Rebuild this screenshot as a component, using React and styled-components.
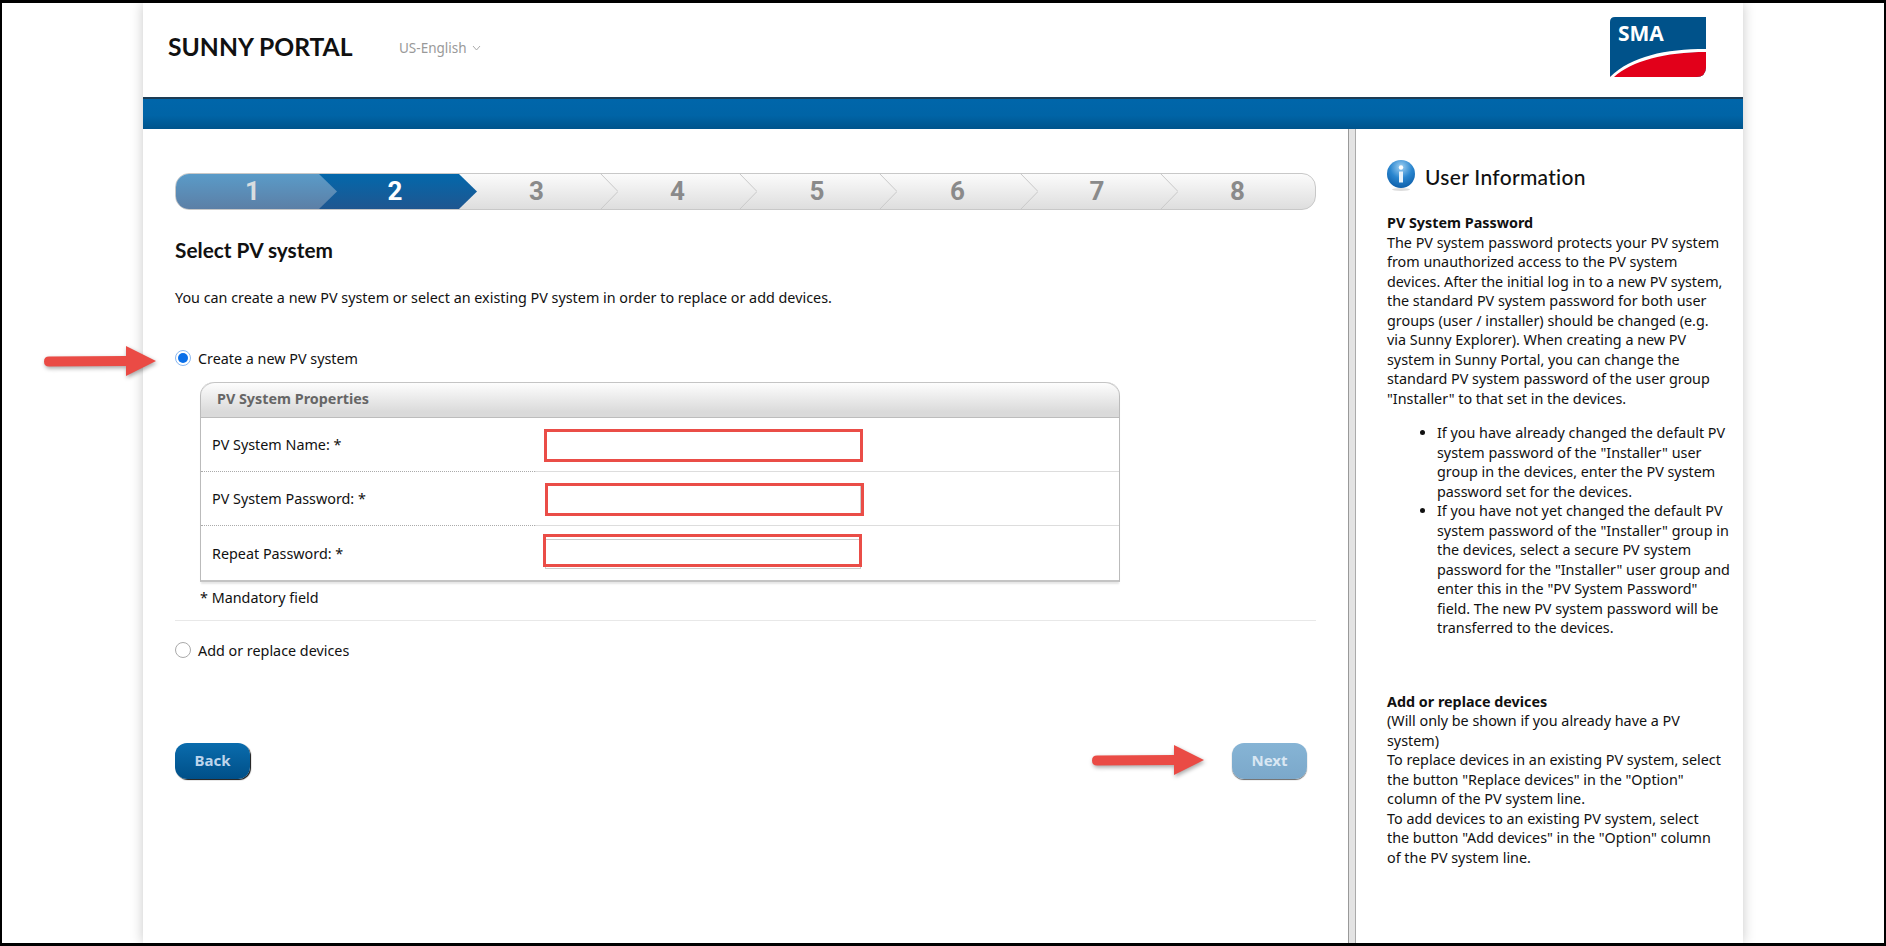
import React from "react";
import styled, { createGlobalStyle } from "styled-components";

const Global = createGlobalStyle`
  html, body { margin: 0; padding: 0; background: #fff; }
  body { font-family: "Noto Sans", "Open Sans", sans-serif; font-size: 14.35px; color: #111; }
`;

const Frame = styled.div`
  box-sizing: border-box; width: 1886px; height: 946px; overflow: hidden;
  border: solid #000; border-width: 3px 2px;
  background: #fff;
`;
const Page = styled.div`
  width: 1600px; height: 940px; margin-left: 141px; background: #fff;
  display: flex; flex-direction: column;
  box-shadow: 0 0 12px rgba(0,0,0,.22);
`;
const Header = styled.header`
  height: 94px; flex: none; display: flex; align-items: center; padding: 0 37px 0 25px; box-sizing: border-box;
`;
const Brand = styled.div`
  font-family: "Lato", sans-serif; font-weight: 700; font-size: 24.7px; color: #111; width: 231px; white-space: nowrap;
  margin-top: -8px;
`;
const Lang = styled.div`
  display: flex; align-items: center; gap: 5px; font-size: 13.5px; color: #999; flex: 1; margin-top: -5px;
`;
const LogoSlot = styled.div`display: flex; margin-top: -7px;`;
const BlueBar = styled.div`
  height: 32px; flex: none; box-sizing: border-box; border-top: 2px solid #1c3c55;
  background: linear-gradient(#0066aa 0%, #0064a6 55%, #00548c 100%);
`;
const Main = styled.main`flex: 1; display: flex; min-height: 0;`;
const Content = styled.section`
  width: 1205px; flex: none; box-sizing: border-box; padding: 44px 32px 0 32px;
`;
const Divider = styled.div`
  width: 8px; flex: none; box-sizing: border-box; background: #e3e3e3;
  border-left: 1px solid #999; border-right: 1px solid #aaa;
`;
const Aside = styled.aside`
  flex: 1; box-sizing: border-box; padding: 32px 0 0 31px; line-height: 19.5px; white-space: nowrap;
`;

const Stepper = styled.div`
  display: flex; height: 37px; box-sizing: border-box; border: 1px solid #c8c8c8; border-radius: 14px; overflow: hidden;
  background: linear-gradient(#fbfbfb, #dedede);
`;
const Step = styled.div`
  position: relative; flex: none; width: ${p => p.$w}px; z-index: ${p => p.$z};
  display: flex; align-items: center; justify-content: center; padding-left: ${p => p.$pad}px; box-sizing: border-box;
`;
const StepFill = styled.div`
  position: absolute; top: 0; bottom: 0; left: 0; right: -18px;
  background: ${p => p.$kind === "done" ? "linear-gradient(#5a9bc8, #5c7fa6)" : "linear-gradient(#0368ab, #1f5690)"};
  clip-path: polygon(0 0, calc(100% - 18px) 0, 100% 50%, calc(100% - 18px) 100%, 0 100%);
`;
const StepNum = styled.span`
  position: relative; font-family: "Roboto", sans-serif; font-weight: 700; font-size: 26px; line-height: 1; margin-top: -1px;
  color: ${p => p.$kind === "done" ? "#d8dde0" : p.$kind === "active" ? "#fff" : "#8a8a8a"};
`;
const Chevron = styled.svg`position: absolute; top: -1px; right: -18px; width: 18px; height: 37px;`;

const Title = styled.h1`
  margin: 26px 0 0; font-family: "Lato", sans-serif; font-weight: 700; font-size: 20.8px; line-height: 27px; color: #111;
`;
const Intro = styled.p`margin: 25px 0 0; line-height: 20px;`;
const RadioRow = styled.label`
  position: relative; display: flex; align-items: center; gap: 7px; height: 20px; margin-top: ${p => p.$top}px;
`;
const Radio = styled.span`
  width: 16px; height: 16px; box-sizing: border-box; border-radius: 50%; background: #fff; flex: none;
  border: 1px solid ${p => p.$on ? "#8ab8f0" : "#aaa"};
  display: flex; align-items: center; justify-content: center;
  &::after { content: ""; display: ${p => p.$on ? "block" : "none"}; width: 10px; height: 10px; border-radius: 50%; background: #0a6fe8; }
`;
const Card = styled.div`
  width: 920px; margin: 14px 0 0 25px; box-sizing: border-box;
  border: 1px solid #bbb; border-top: 0; border-bottom: 2px solid #c4c4c4;
  box-shadow: 0 3px 2px -1px #e6e6e6;
  border-radius: 14px 14px 0 0;
`;
const CardHead = styled.div`
  height: 36px; box-sizing: border-box; display: flex; align-items: center; padding: 0 0 3px 16px;
  font-weight: 700; font-size: 14.35px; color: #666;
  border-radius: 14px 14px 0 0; border-top: 1px solid #c4c4c4; border-bottom: 1px solid #bcbcbc;
  background: linear-gradient(#fdfdfd 0%, #dadada 85%);
`;
const Row = styled.div`display: flex; height: 54px;`;
const LabelCell = styled.div`
  width: 323px; padding-left: 11px; flex: none; display: flex; align-items: center;
  ${p => p.$last ? "" : "border-bottom: 1px dotted #aaa;"}
`;
const FieldCell = styled.div`
  flex: 1; padding: 13px 0 0 10px;
  ${p => p.$last ? "" : "border-bottom: 1px solid #ddd;"}
`;
const Field = styled.div`position: relative; width: 316px; height: 30px; box-sizing: border-box; border: 1px solid #ccc; background: #fff;`;
const RedBox = styled.div`
  position: absolute; left: ${p => p.$x}px; top: ${p => p.$y}px; width: 319px; height: 33px; box-sizing: border-box;
  border: 3px solid #ea4d47;
`;
const Note = styled.div`margin: 6px 0 0 25px; line-height: 20px;`;
const Rule = styled.hr`border: 0; height: 1px; background: #e8e8e8; margin: 12px 0 0;`;
const Buttons = styled.div`display: flex; justify-content: space-between; margin-top: 83px; padding-right: 9px;`;
const Button = styled.button`
  position: relative; width: 75px; height: 36px; border: 0; border-radius: 12px; padding: 0 0 3px; font: 700 15px "Noto Sans", sans-serif;
  ${p => p.$primary
    ? "color: #bdd5ec; background: linear-gradient(#0a6cad, #004f88); box-shadow: 1px 1px 1px #111;"
    : "color: #d9e7f3; background: linear-gradient(#86b4d5, #7ba8ca); box-shadow: 0 1px 1px #666;"}
`;
const ArrowMark = styled.svg`
  position: absolute; left: ${p => p.$x}px; top: ${p => p.$y}px; width: 112px; height: 30px; overflow: visible;
  filter: drop-shadow(1px 2px 2px rgba(0,0,0,.35));
`;

const InfoHead = styled.div`display: flex; align-items: center; gap: 10px; height: 30px;`;
const InfoTitle = styled.h2`margin: 2px 0 0; font-family: "Lato", sans-serif; font-weight: 500; font-size: 21px; line-height: 30px; color: #111; letter-spacing: .3px;`;
const Sub = styled.div`font-weight: 700; margin-top: ${p => p.$top}px;`;
const Bullets = styled.ul`margin: 15px 0 0; padding: 0 0 0 50px;`;

const Arrow = ({ x, y }) => (
  <ArrowMark $x={x} $y={y} viewBox="0 0 112 30">
    <path d="M5 10.5 L82 10 L82 0 L112 15 L82 30 L82 20 L5 20.5 Q0 20.5 0 15.5 Q0 10.5 5 10.5Z" fill="#ea4b45" />
  </ArrowMark>
);

const SmaLogo = () => (
  <svg width="96" height="60" viewBox="0 0 96 60">
    <path d="M5 0 H96 V50 Q96 60 86 60 H0 V5 Q0 0 5 0Z" fill="#00528a" />
    <path d="M0 60 C22 42 55 35 96 35 V50 Q96 60 86 60Z" fill="#e2001a" />
    <path d="M0 60 C22 39 55 32 96 32 V35 C55 35 22 44 4 60Z" fill="#fff" />
    <text x="8" y="24" fontFamily="Open Sans, sans-serif" fontWeight="700" fontSize="21" fill="#fff">SMA</text>
  </svg>
);

const InfoIcon = () => (
  <svg width="28" height="32" viewBox="0 0 28 32">
    <defs>
      <radialGradient id="ig" cx="50%" cy="25%" r="80%">
        <stop offset="0%" stopColor="#9fd0f2" />
        <stop offset="50%" stopColor="#2a86cf" />
        <stop offset="100%" stopColor="#0a5aa5" />
      </radialGradient>
    </defs>
    <ellipse cx="14" cy="29.5" rx="9" ry="1.5" fill="#ddd" />
    <circle cx="14" cy="14" r="14" fill="url(#ig)" />
    <circle cx="14" cy="7.5" r="2.2" fill="#fff" />
    <rect x="12" y="11.5" width="4" height="11" fill="#e8f3fb" />
  </svg>
);

const steps = [
  { n: 1, w: 143, kind: "done", pad: 10 },
  { n: 2, w: 140, kind: "active", pad: 12 },
  { n: 3, w: 141, pad: 14 },
  { n: 4, w: 139, pad: 16 },
  { n: 5, w: 140, pad: 16 },
  { n: 6, w: 141, pad: 16 },
  { n: 7, w: 140, pad: 14 },
  { n: 8, w: 155, pad: 0 },
];

const fields = [
  { label: "PV System Name: *", x: -2, y: -3 },
  { label: "PV System Password: *", x: -1, y: -3 },
  { label: "Repeat Password: *", x: -3, y: -6, last: true },
];

export default function App() {
  return (
    <Frame>
      <Global />
      <Page>
        <Header>
          <Brand>SUNNY PORTAL</Brand>
          <Lang>
            US-English
            <svg width="9" height="6" viewBox="0 0 9 6"><path d="M1 1l3.5 4L8 1" fill="none" stroke="#aaa" /></svg>
          </Lang>
          <LogoSlot><SmaLogo /></LogoSlot>
        </Header>
        <BlueBar />
        <Main>
          <Content>
            <Stepper>
              {steps.map((s, i) => (
                <Step key={s.n} $w={s.w} $z={20 - i} $pad={s.pad}>
                  {s.kind && <StepFill $kind={s.kind} />}
                  <StepNum $kind={s.kind}>{s.n}</StepNum>
                  {i < 7 && !s.kind && (
                    <Chevron viewBox="0 0 18 37">
                      <path d="M0 0L18 18.5L0 37" fill="none" stroke="#c9c9c9" />
                    </Chevron>
                  )}
                </Step>
              ))}
            </Stepper>
            <Title>Select PV system</Title>
            <Intro>You can create a new PV system or select an existing PV system in order to replace or add devices.</Intro>
            <RadioRow $top={40}>
              <Arrow x={-131} y={-2} />
              <Radio $on />
              Create a new PV system
            </RadioRow>
            <Card>
              <CardHead>PV System Properties</CardHead>
              {fields.map(f => (
                <Row key={f.label}>
                  <LabelCell $last={f.last}>{f.label}</LabelCell>
                  <FieldCell $last={f.last}>
                    <Field><RedBox $x={f.x} $y={f.y} /></Field>
                  </FieldCell>
                </Row>
              ))}
            </Card>
            <Note>* Mandatory field</Note>
            <Rule />
            <RadioRow $top={19}>
              <Radio />
              Add or replace devices
            </RadioRow>
            <Buttons>
              <Button $primary>Back</Button>
              <Button>
                <Arrow x={-140} y={2} />
                Next
              </Button>
            </Buttons>
          </Content>
          <Divider />
          <Aside>
            <InfoHead>
              <InfoIcon />
              <InfoTitle>User Information</InfoTitle>
            </InfoHead>
            <Sub $top={22}>PV System Password</Sub>
            <div>
              The PV system password protects your PV system<br />
              from unauthorized access to the PV system<br />
              devices. After the initial log in to a new PV system,<br />
              the standard PV system password for both user<br />
              groups (user / installer) should be changed (e.g.<br />
              via Sunny Explorer). When creating a new PV<br />
              system in Sunny Portal, you can change the<br />
              standard PV system password of the user group<br />
              "Installer" to that set in the devices.
            </div>
            <Bullets>
              <li>
                If you have already changed the default PV<br />
                system password of the "Installer" user<br />
                group in the devices, enter the PV system<br />
                password set for the devices.
              </li>
              <li>
                If you have not yet changed the default PV<br />
                system password of the "Installer" group in<br />
                the devices, select a secure PV system<br />
                password for the "Installer" user group and<br />
                enter this in the "PV System Password"<br />
                field. The new PV system password will be<br />
                transferred to the devices.
              </li>
            </Bullets>
            <Sub $top={54}>Add or replace devices</Sub>
            <div>
              (Will only be shown if you already have a PV<br />
              system)<br />
              To replace devices in an existing PV system, select<br />
              the button "Replace devices" in the "Option"<br />
              column of the PV system line.<br />
              To add devices to an existing PV system, select<br />
              the button "Add devices" in the "Option" column<br />
              of the PV system line.
            </div>
          </Aside>
        </Main>
      </Page>
    </Frame>
  );
}
